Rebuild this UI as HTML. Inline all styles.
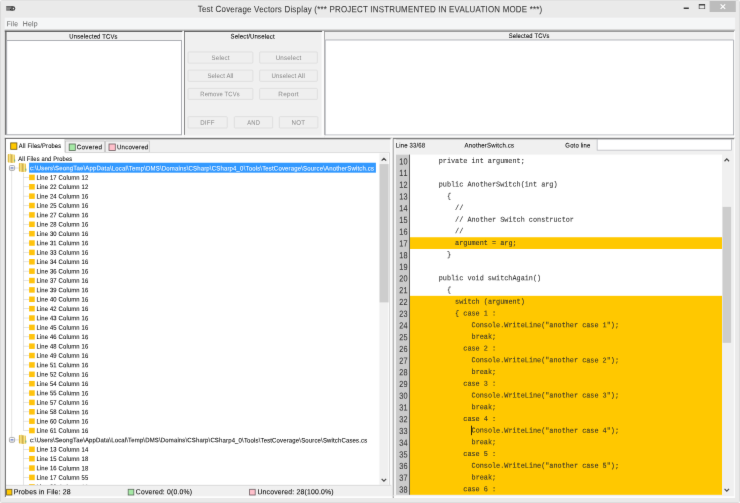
<!DOCTYPE html><html><head><meta charset="utf-8"><title>Test Coverage Vectors Display</title><style>
*{box-sizing:border-box;margin:0;padding:0}
html,body{width:740px;height:503px;overflow:hidden;background:#eaeaea}
body{font-family:"Liberation Sans",sans-serif;color:#000}
svg{position:absolute;left:0;top:0;display:block}
#s{will-change:transform}
text{font-family:"Liberation Sans",sans-serif;white-space:pre;text-rendering:geometricPrecision}
text.m{font-family:"Liberation Mono",monospace}
text.n{font-kerning:none}
</style></head><body>
<svg id="s" width="740" height="503" viewBox="0 0 740 503">
<filter id="sf" filterUnits="userSpaceOnUse" x="0" y="0" width="740" height="503" color-interpolation-filters="sRGB"><feConvolveMatrix order="3" kernelMatrix="0.0036 0.0528 0.0036 0.0528 0.7744 0.0528 0.0036 0.0528 0.0036" edgeMode="duplicate" preserveAlpha="true"/></filter>
<g filter="url(#sf)">
<rect x="0" y="0" width="740" height="503" fill="#eaeaea"/>
<text transform="matrix(0.8796 0.0007 -0.0007 1 197.75 12.1)" font-size="9" letter-spacing="0.251" fill="#333" stroke="#333" stroke-width="0.05">Test Coverage Vectors Display (*** PROJECT INSTRUMENTED IN EVALUATION MODE ***)</text>
<rect x="6.2" y="6.3" width="6.6" height="4.4" rx="0.5" fill="#7a7a7a"/>
<rect x="6.3" y="6.2" width="7.1" height="0.8" fill="#5a5a5a"/>
<path d="M11.3 6.3 H13 Q15.3 6.3 15.3 8.5 Q15.3 10.7 13 10.7 H11.3 Z" fill="#4c4c4c"/>
<ellipse cx="13.4" cy="8.5" rx="0.65" ry="0.85" fill="#ededed"/>
<circle cx="10.5" cy="9.6" r="0.55" fill="#1c1c1c"/>
<rect x="6.6" y="8" width="3.6" height="0.7" fill="#8e8e8e"/>
<rect x="709.6" y="0.9" width="26.2" height="11.1" fill="#bcbcbc"/>
<path d="M720.6 4.3 L725.2 8.9 M725.2 4.3 L720.6 8.9" stroke="#fff" stroke-width="1.15" fill="none"/>
<rect x="683.7" y="7.5" width="5.1" height="1.5" fill="#3a3a3a"/>
<path d="M698.8 4 h6.3 v5.1 h-6.3 Z M699.5 5.5 v2.9 h4.9 v-2.9 Z" fill="#454545" fill-rule="evenodd"/>
<rect x="4.7" y="17.6" width="730.6" height="12" fill="#f5f6f7"/>
<text transform="matrix(0.8954 0.0007 -0.0007 1 6.73 26.3)" font-size="7.4" letter-spacing="0.209" fill="#606060">File</text>
<text transform="matrix(0.9387 0.0007 -0.0007 1 22.63 26.3)" font-size="7.4" letter-spacing="0.267" fill="#606060">Help</text>
<rect x="4.7" y="29.6" width="730.6" height="468.3" fill="#f0f0f0"/>
<rect x="4.7" y="29.3" width="730.6" height="0.9" fill="#cfcfcf"/>
<rect x="4.8" y="30.1" width="179.1" height="107.7" fill="#f0f0f0"/>
<rect x="181.9" y="30.7" width="2" height="107.1" fill="#fcfcfc"/>
<rect x="5.4" y="135.6" width="178.5" height="2.2" fill="#fcfcfc"/>
<rect x="4.8" y="30.1" width="179.1" height="0.8" fill="#a0a0a0"/>
<rect x="4.8" y="30.9" width="177.5" height="1.05" fill="#5e5e5e"/>
<rect x="4.8" y="30.1" width="0.4" height="105" fill="#a0a0a0"/>
<rect x="5.2" y="30.9" width="1.3" height="103.9" fill="#5e5e5e"/>
<rect x="184" y="30.1" width="140.1" height="107.7" fill="#f0f0f0"/>
<rect x="321.6" y="30.7" width="2.5" height="107.1" fill="#fcfcfc"/>
<rect x="184.6" y="135.6" width="139.5" height="2.2" fill="#fcfcfc"/>
<rect x="184" y="30.1" width="140.1" height="0.8" fill="#a0a0a0"/>
<rect x="184" y="30.9" width="138.1" height="1.05" fill="#5e5e5e"/>
<rect x="184" y="30.1" width="0.3" height="105" fill="#a0a0a0"/>
<rect x="184.3" y="30.9" width="0.65" height="103.9" fill="#5e5e5e"/>
<rect x="324.2" y="30.1" width="410.9" height="107.7" fill="#f0f0f0"/>
<rect x="733.8" y="30.7" width="1.3" height="107.1" fill="#fcfcfc"/>
<rect x="324.8" y="135.6" width="410.3" height="2.2" fill="#fcfcfc"/>
<rect x="324.2" y="30.1" width="410.9" height="0.5" fill="#a2a2a2"/>
<rect x="324.2" y="30.6" width="409.86" height="1.25" fill="#8a8a8a"/>
<rect x="324.2" y="30.1" width="0.15" height="105" fill="#a2a2a2"/>
<rect x="324.35" y="30.6" width="0.65" height="104.2" fill="#8a8a8a"/>
<text transform="matrix(0.8930 0.0007 -0.0007 1 69.37 38.6)" font-size="6.6" letter-spacing="0.193" stroke="#000" stroke-width="0.06">Unselected TCVs</text>
<text transform="matrix(0.9169 0.0007 -0.0007 1 230.47 38.6)" font-size="6.6" letter-spacing="0.172" stroke="#000" stroke-width="0.06">Select/Unselect</text>
<text transform="matrix(0.8842 0.0007 -0.0007 1 508.67 38)" font-size="6.6" letter-spacing="0.193" stroke="#000" stroke-width="0.06">Selected TCVs</text>
<rect x="6.72" y="40.47" width="174.85" height="94.3" fill="#fff" stroke="#a2a4aa" stroke-width="0.85"/>
<rect x="324.9" y="39.4" width="409" height="95.8" fill="#fff"/>
<path d="M325.2 135.2 V39.95 H733.6 V135.2" fill="none" stroke="#b0b2b8" stroke-width="1.0"/>
<rect x="325" y="134.55" width="408.9" height="0.65" fill="#abadb3"/>
<rect x="188.05" y="51.95" width="64.8" height="11.2" rx="0.8" fill="#efefef" stroke="#d9d9d9" stroke-width="0.7"/>
<text transform="matrix(0.9249 0.0007 -0.0007 1 211.57 59.9)" font-size="6.6" letter-spacing="0.193" fill="#858585">Select</text>
<rect x="259.65" y="51.95" width="57.7" height="11.2" rx="0.8" fill="#efefef" stroke="#d9d9d9" stroke-width="0.7"/>
<text transform="matrix(0.9456 0.0007 -0.0007 1 275.67 59.9)" font-size="6.6" letter-spacing="0.193" fill="#858585">Unselect</text>
<rect x="188.05" y="70.15" width="64.8" height="11.2" rx="0.8" fill="#efefef" stroke="#d9d9d9" stroke-width="0.7"/>
<text transform="matrix(0.9084 0.0007 -0.0007 1 207.47 78.1)" font-size="6.6" letter-spacing="0.159" fill="#858585">Select All</text>
<rect x="259.65" y="70.15" width="57.7" height="11.2" rx="0.8" fill="#efefef" stroke="#d9d9d9" stroke-width="0.7"/>
<text transform="matrix(0.9163 0.0007 -0.0007 1 271.57 78.1)" font-size="6.6" letter-spacing="0.165" fill="#858585">Unselect All</text>
<rect x="188.05" y="88.45" width="64.8" height="11" rx="0.8" fill="#efefef" stroke="#d9d9d9" stroke-width="0.7"/>
<text transform="matrix(0.8738 0.0007 -0.0007 1 200.27 96.3)" font-size="6.6" letter-spacing="0.225" fill="#858585">Remove TCVs</text>
<rect x="259.65" y="88.45" width="57.7" height="11" rx="0.8" fill="#efefef" stroke="#d9d9d9" stroke-width="0.7"/>
<text transform="matrix(0.9667 0.0007 -0.0007 1 278.37 96.3)" font-size="6.6" letter-spacing="0.209" fill="#858585">Report</text>
<rect x="188.05" y="116.65" width="39.2" height="11.4" rx="0.8" fill="#efefef" stroke="#d9d9d9" stroke-width="0.7"/>
<text transform="matrix(0.9303 0.0007 -0.0007 1 200.17 124.7)" font-size="6.6" letter-spacing="0.257" fill="#858585">DIFF</text>
<rect x="234.35" y="116.65" width="38.3" height="11.4" rx="0.8" fill="#efefef" stroke="#d9d9d9" stroke-width="0.7"/>
<text transform="matrix(0.8698 0.0007 -0.0007 1 247.17 124.7)" font-size="6.6" letter-spacing="0.367" fill="#858585">AND</text>
<rect x="279.35" y="116.65" width="38.5" height="11.4" rx="0.8" fill="#efefef" stroke="#d9d9d9" stroke-width="0.7"/>
<text transform="matrix(0.9314 0.0007 -0.0007 1 291.47 124.7)" font-size="6.6" letter-spacing="0.367" fill="#858585">NOT</text>
<rect x="4.8" y="137.8" width="387.6" height="360.2" fill="#f0f0f0"/>
<rect x="390.1" y="138.4" width="2.3" height="359.6" fill="#fcfcfc"/>
<rect x="5.4" y="496.5" width="387" height="1.5" fill="#fcfcfc"/>
<rect x="4.8" y="137.8" width="387.6" height="0.4" fill="#929292"/>
<rect x="4.8" y="138.2" width="385.76" height="1.05" fill="#626262"/>
<rect x="4.8" y="137.8" width="0.4" height="359.45" fill="#929292"/>
<rect x="5.2" y="138.2" width="1.1" height="358.75" fill="#626262"/>
<rect x="6" y="152.2" width="383.6" height="332.7" fill="#fff"/>
<rect x="6" y="139" width="58.6" height="13.4" fill="#fff"/>
<rect x="64.4" y="139.3" width="0.5" height="12.9" fill="#cfcfcf"/>
<rect x="65.5" y="141" width="38.8" height="11.3" fill="#f0f0f0" stroke="#b4b4b4" stroke-width="0.6"/>
<rect x="105.7" y="141" width="43.5" height="11.3" fill="#f0f0f0" stroke="#b4b4b4" stroke-width="0.6"/>
<rect x="64.9" y="152.1" width="324.7" height="0.6" fill="#fff"/>
<rect x="10.7" y="142.9" width="6.2" height="6.4" fill="#ffc800" stroke="#6b5510" stroke-width="0.8"/>
<rect x="69.2" y="144" width="6.1" height="6.4" fill="#a6e9a6" stroke="#566a56" stroke-width="0.8"/>
<rect x="109" y="144" width="6.3" height="6.4" fill="#ffc0cb" stroke="#6e5c60" stroke-width="0.8"/>
<text transform="matrix(0.8756 0.0007 -0.0007 1 18.87 147.9)" font-size="6.6" letter-spacing="0.161" stroke="#000" stroke-width="0.06">All Files/Probes</text>
<text transform="matrix(0.9543 0.0007 -0.0007 1 76.87 149.2)" font-size="6.6" letter-spacing="0.219" stroke="#000" stroke-width="0.06">Covered</text>
<text transform="matrix(0.9304 0.0007 -0.0007 1 116.97 149.2)" font-size="6.6" letter-spacing="0.210" stroke="#000" stroke-width="0.06">Uncovered</text>
<defs><linearGradient id="g1" x1="0" x2="1" y1="0" y2="0"><stop offset="0" stop-color="#c9a022"/><stop offset="0.3" stop-color="#eccb58"/><stop offset="0.55" stop-color="#f9e9a0"/><stop offset="0.8" stop-color="#e6c450"/><stop offset="1" stop-color="#bd931c"/></linearGradient><linearGradient id="g2" x1="0" x2="1" y1="0" y2="0"><stop offset="0" stop-color="#bd931c"/><stop offset="0.3" stop-color="#edd060"/><stop offset="0.5" stop-color="#f8e89c"/><stop offset="0.8" stop-color="#e8c856"/><stop offset="1" stop-color="#caa22a"/></linearGradient><linearGradient id="g3" x1="0" x2="0" y1="0" y2="1"><stop offset="0" stop-color="#fff"/><stop offset="1" stop-color="#dedede"/></linearGradient></defs>
<svg x="6" y="152.2" width="373.4" height="332.7" viewBox="6 152.2 373.4 332.7">
<rect x="11.5" y="170.82" width="0.6" height="266.3" fill="#d2d2d2"/>
<rect x="14.9" y="167.72" width="3.9" height="0.6" fill="#d2d2d2"/>
<rect x="14.9" y="439.63" width="3.9" height="0.6" fill="#d2d2d2"/>
<rect x="23" y="172.71" width="0.6" height="257.84" fill="#d2d2d2"/>
<rect x="23" y="444.62" width="0.6" height="41.38" fill="#d2d2d2"/>
<g transform="translate(7.8 153.81)"><path d="M0 0.9 Q0 0.2 0.8 0.15 L2.9 0 Q3.6 0 3.6 0.7 L3.6 8.6 Q3.5 9.1 2.8 9.05 L0.7 8.7 Q0 8.6 0 8 Z" fill="url(#g1)"/><path d="M3.6 1.0 Q3.6 0.4 4.3 0.4 L6.3 0.7 Q7.0 0.8 7.0 1.5 L7.3 8.2 Q7.3 8.9 6.6 9.0 L4.4 9.2 Q3.6 9.2 3.6 8.6 Z" fill="url(#g2)"/><rect x="6.4" y="5.7" width="1.0" height="1.9" rx="0.3" fill="#5fb391"/></g>
<text transform="matrix(0.8934 0.0007 -0.0007 1 18.28 160.95)" font-size="6.45" letter-spacing="0.159" stroke="#000" stroke-width="0.06">All Files and Probes</text>
<rect x="9.43" y="165.55" width="5.15" height="4.85" rx="1.1" fill="url(#g3)" stroke="#a2a2a2" stroke-width="0.85"/>
<rect x="10.6" y="167.47" width="2.8" height="0.95" fill="#3f5ab8"/>
<g transform="translate(18.9 162.89)"><path d="M0 0.9 Q0 0.2 0.8 0.15 L2.9 0 Q3.6 0 3.6 0.7 L3.6 8.6 Q3.5 9.1 2.8 9.05 L0.7 8.7 Q0 8.6 0 8 Z" fill="url(#g1)"/><path d="M3.6 1.0 Q3.6 0.4 4.3 0.4 L6.3 0.7 Q7.0 0.8 7.0 1.5 L7.3 8.2 Q7.3 8.9 6.6 9.0 L4.4 9.2 Q3.6 9.2 3.6 8.6 Z" fill="url(#g2)"/><rect x="6.4" y="5.7" width="1.0" height="1.9" rx="0.3" fill="#5fb391"/></g>
<rect x="29.1" y="162.74" width="346.8" height="9.93" fill="#3399ff"/>
<text transform="matrix(0.9360 0.0007 -0.0007 1 29.88 170.32)" font-size="6.45" letter-spacing="0.172" fill="#fff" stroke="#fff" stroke-width="0.06">c:\Users\SeongTae\AppData\Local\Temp\DMS\Domains\CSharp\CSharp4_0\Tools\TestCoverage\Source\AnotherSwitch.cs</text>
<rect x="23.3" y="177.1" width="5.9" height="0.6" fill="#d2d2d2"/>
<rect x="29.1" y="174.65" width="5.65" height="5.5" fill="#ffc30d"/>
<text transform="matrix(0.9114 0.0007 -0.0007 1 36.38 179.7)" font-size="6.45" letter-spacing="0.178" stroke="#000" stroke-width="0.06">Line 17 Column 12</text>
<rect x="23.3" y="186.48" width="5.9" height="0.6" fill="#d2d2d2"/>
<rect x="29.1" y="184.03" width="5.65" height="5.5" fill="#ffc30d"/>
<text transform="matrix(0.9114 0.0007 -0.0007 1 36.38 189.08)" font-size="6.45" letter-spacing="0.178" stroke="#000" stroke-width="0.06">Line 22 Column 12</text>
<rect x="23.3" y="195.85" width="5.9" height="0.6" fill="#d2d2d2"/>
<rect x="29.1" y="193.4" width="5.65" height="5.5" fill="#ffc30d"/>
<text transform="matrix(0.9114 0.0007 -0.0007 1 36.38 198.45)" font-size="6.45" letter-spacing="0.178" stroke="#000" stroke-width="0.06">Line 24 Column 16</text>
<rect x="23.3" y="205.23" width="5.9" height="0.6" fill="#d2d2d2"/>
<rect x="29.1" y="202.78" width="5.65" height="5.5" fill="#ffc30d"/>
<text transform="matrix(0.9114 0.0007 -0.0007 1 36.38 207.83)" font-size="6.45" letter-spacing="0.178" stroke="#000" stroke-width="0.06">Line 25 Column 16</text>
<rect x="23.3" y="214.6" width="5.9" height="0.6" fill="#d2d2d2"/>
<rect x="29.1" y="212.15" width="5.65" height="5.5" fill="#ffc30d"/>
<text transform="matrix(0.9114 0.0007 -0.0007 1 36.38 217.2)" font-size="6.45" letter-spacing="0.178" stroke="#000" stroke-width="0.06">Line 27 Column 16</text>
<rect x="23.3" y="223.98" width="5.9" height="0.6" fill="#d2d2d2"/>
<rect x="29.1" y="221.53" width="5.65" height="5.5" fill="#ffc30d"/>
<text transform="matrix(0.9114 0.0007 -0.0007 1 36.38 226.58)" font-size="6.45" letter-spacing="0.178" stroke="#000" stroke-width="0.06">Line 28 Column 16</text>
<rect x="23.3" y="233.36" width="5.9" height="0.6" fill="#d2d2d2"/>
<rect x="29.1" y="230.91" width="5.65" height="5.5" fill="#ffc30d"/>
<text transform="matrix(0.9114 0.0007 -0.0007 1 36.38 235.96)" font-size="6.45" letter-spacing="0.178" stroke="#000" stroke-width="0.06">Line 30 Column 16</text>
<rect x="23.3" y="242.73" width="5.9" height="0.6" fill="#d2d2d2"/>
<rect x="29.1" y="240.28" width="5.65" height="5.5" fill="#ffc30d"/>
<text transform="matrix(0.9114 0.0007 -0.0007 1 36.38 245.33)" font-size="6.45" letter-spacing="0.178" stroke="#000" stroke-width="0.06">Line 31 Column 16</text>
<rect x="23.3" y="252.11" width="5.9" height="0.6" fill="#d2d2d2"/>
<rect x="29.1" y="249.66" width="5.65" height="5.5" fill="#ffc30d"/>
<text transform="matrix(0.9114 0.0007 -0.0007 1 36.38 254.71)" font-size="6.45" letter-spacing="0.178" stroke="#000" stroke-width="0.06">Line 33 Column 16</text>
<rect x="23.3" y="261.48" width="5.9" height="0.6" fill="#d2d2d2"/>
<rect x="29.1" y="259.03" width="5.65" height="5.5" fill="#ffc30d"/>
<text transform="matrix(0.9114 0.0007 -0.0007 1 36.38 264.08)" font-size="6.45" letter-spacing="0.178" stroke="#000" stroke-width="0.06">Line 34 Column 16</text>
<rect x="23.3" y="270.86" width="5.9" height="0.6" fill="#d2d2d2"/>
<rect x="29.1" y="268.41" width="5.65" height="5.5" fill="#ffc30d"/>
<text transform="matrix(0.9114 0.0007 -0.0007 1 36.38 273.46)" font-size="6.45" letter-spacing="0.178" stroke="#000" stroke-width="0.06">Line 36 Column 16</text>
<rect x="23.3" y="280.24" width="5.9" height="0.6" fill="#d2d2d2"/>
<rect x="29.1" y="277.79" width="5.65" height="5.5" fill="#ffc30d"/>
<text transform="matrix(0.9114 0.0007 -0.0007 1 36.38 282.84)" font-size="6.45" letter-spacing="0.178" stroke="#000" stroke-width="0.06">Line 37 Column 16</text>
<rect x="23.3" y="289.61" width="5.9" height="0.6" fill="#d2d2d2"/>
<rect x="29.1" y="287.16" width="5.65" height="5.5" fill="#ffc30d"/>
<text transform="matrix(0.9114 0.0007 -0.0007 1 36.38 292.21)" font-size="6.45" letter-spacing="0.178" stroke="#000" stroke-width="0.06">Line 39 Column 16</text>
<rect x="23.3" y="298.99" width="5.9" height="0.6" fill="#d2d2d2"/>
<rect x="29.1" y="296.54" width="5.65" height="5.5" fill="#ffc30d"/>
<text transform="matrix(0.9114 0.0007 -0.0007 1 36.38 301.59)" font-size="6.45" letter-spacing="0.178" stroke="#000" stroke-width="0.06">Line 40 Column 16</text>
<rect x="23.3" y="308.36" width="5.9" height="0.6" fill="#d2d2d2"/>
<rect x="29.1" y="305.91" width="5.65" height="5.5" fill="#ffc30d"/>
<text transform="matrix(0.9114 0.0007 -0.0007 1 36.38 310.96)" font-size="6.45" letter-spacing="0.178" stroke="#000" stroke-width="0.06">Line 42 Column 16</text>
<rect x="23.3" y="317.74" width="5.9" height="0.6" fill="#d2d2d2"/>
<rect x="29.1" y="315.29" width="5.65" height="5.5" fill="#ffc30d"/>
<text transform="matrix(0.9114 0.0007 -0.0007 1 36.38 320.34)" font-size="6.45" letter-spacing="0.178" stroke="#000" stroke-width="0.06">Line 43 Column 16</text>
<rect x="23.3" y="327.12" width="5.9" height="0.6" fill="#d2d2d2"/>
<rect x="29.1" y="324.67" width="5.65" height="5.5" fill="#ffc30d"/>
<text transform="matrix(0.9114 0.0007 -0.0007 1 36.38 329.72)" font-size="6.45" letter-spacing="0.178" stroke="#000" stroke-width="0.06">Line 45 Column 16</text>
<rect x="23.3" y="336.49" width="5.9" height="0.6" fill="#d2d2d2"/>
<rect x="29.1" y="334.04" width="5.65" height="5.5" fill="#ffc30d"/>
<text transform="matrix(0.9114 0.0007 -0.0007 1 36.38 339.09)" font-size="6.45" letter-spacing="0.178" stroke="#000" stroke-width="0.06">Line 46 Column 16</text>
<rect x="23.3" y="345.87" width="5.9" height="0.6" fill="#d2d2d2"/>
<rect x="29.1" y="343.42" width="5.65" height="5.5" fill="#ffc30d"/>
<text transform="matrix(0.9114 0.0007 -0.0007 1 36.38 348.47)" font-size="6.45" letter-spacing="0.178" stroke="#000" stroke-width="0.06">Line 48 Column 16</text>
<rect x="23.3" y="355.24" width="5.9" height="0.6" fill="#d2d2d2"/>
<rect x="29.1" y="352.79" width="5.65" height="5.5" fill="#ffc30d"/>
<text transform="matrix(0.9114 0.0007 -0.0007 1 36.38 357.84)" font-size="6.45" letter-spacing="0.178" stroke="#000" stroke-width="0.06">Line 49 Column 16</text>
<rect x="23.3" y="364.62" width="5.9" height="0.6" fill="#d2d2d2"/>
<rect x="29.1" y="362.17" width="5.65" height="5.5" fill="#ffc30d"/>
<text transform="matrix(0.9114 0.0007 -0.0007 1 36.38 367.22)" font-size="6.45" letter-spacing="0.178" stroke="#000" stroke-width="0.06">Line 51 Column 16</text>
<rect x="23.3" y="374" width="5.9" height="0.6" fill="#d2d2d2"/>
<rect x="29.1" y="371.55" width="5.65" height="5.5" fill="#ffc30d"/>
<text transform="matrix(0.9114 0.0007 -0.0007 1 36.38 376.6)" font-size="6.45" letter-spacing="0.178" stroke="#000" stroke-width="0.06">Line 52 Column 16</text>
<rect x="23.3" y="383.37" width="5.9" height="0.6" fill="#d2d2d2"/>
<rect x="29.1" y="380.92" width="5.65" height="5.5" fill="#ffc30d"/>
<text transform="matrix(0.9114 0.0007 -0.0007 1 36.38 385.97)" font-size="6.45" letter-spacing="0.178" stroke="#000" stroke-width="0.06">Line 54 Column 16</text>
<rect x="23.3" y="392.75" width="5.9" height="0.6" fill="#d2d2d2"/>
<rect x="29.1" y="390.3" width="5.65" height="5.5" fill="#ffc30d"/>
<text transform="matrix(0.9114 0.0007 -0.0007 1 36.38 395.35)" font-size="6.45" letter-spacing="0.178" stroke="#000" stroke-width="0.06">Line 55 Column 16</text>
<rect x="23.3" y="402.12" width="5.9" height="0.6" fill="#d2d2d2"/>
<rect x="29.1" y="399.67" width="5.65" height="5.5" fill="#ffc30d"/>
<text transform="matrix(0.9114 0.0007 -0.0007 1 36.38 404.72)" font-size="6.45" letter-spacing="0.178" stroke="#000" stroke-width="0.06">Line 57 Column 16</text>
<rect x="23.3" y="411.5" width="5.9" height="0.6" fill="#d2d2d2"/>
<rect x="29.1" y="409.05" width="5.65" height="5.5" fill="#ffc30d"/>
<text transform="matrix(0.9114 0.0007 -0.0007 1 36.38 414.1)" font-size="6.45" letter-spacing="0.178" stroke="#000" stroke-width="0.06">Line 58 Column 16</text>
<rect x="23.3" y="420.88" width="5.9" height="0.6" fill="#d2d2d2"/>
<rect x="29.1" y="418.43" width="5.65" height="5.5" fill="#ffc30d"/>
<text transform="matrix(0.9114 0.0007 -0.0007 1 36.38 423.48)" font-size="6.45" letter-spacing="0.178" stroke="#000" stroke-width="0.06">Line 60 Column 16</text>
<rect x="23.3" y="430.25" width="5.9" height="0.6" fill="#d2d2d2"/>
<rect x="29.1" y="427.8" width="5.65" height="5.5" fill="#ffc30d"/>
<text transform="matrix(0.9114 0.0007 -0.0007 1 36.38 432.85)" font-size="6.45" letter-spacing="0.178" stroke="#000" stroke-width="0.06">Line 61 Column 16</text>
<rect x="9.43" y="437.45" width="5.15" height="4.85" rx="1.1" fill="url(#g3)" stroke="#a2a2a2" stroke-width="0.85"/>
<rect x="10.6" y="439.38" width="2.8" height="0.95" fill="#3f5ab8"/>
<g transform="translate(18.9 434.79)"><path d="M0 0.9 Q0 0.2 0.8 0.15 L2.9 0 Q3.6 0 3.6 0.7 L3.6 8.6 Q3.5 9.1 2.8 9.05 L0.7 8.7 Q0 8.6 0 8 Z" fill="url(#g1)"/><path d="M3.6 1.0 Q3.6 0.4 4.3 0.4 L6.3 0.7 Q7.0 0.8 7.0 1.5 L7.3 8.2 Q7.3 8.9 6.6 9.0 L4.4 9.2 Q3.6 9.2 3.6 8.6 Z" fill="url(#g2)"/><rect x="6.4" y="5.7" width="1.0" height="1.9" rx="0.3" fill="#5fb391"/></g>
<text transform="matrix(0.9290 0.0007 -0.0007 1 29.88 442.23)" font-size="6.45" letter-spacing="0.173" stroke="#000" stroke-width="0.06">c:\Users\SeongTae\AppData\Local\Temp\DMS\Domains\CSharp\CSharp4_0\Tools\TestCoverage\Source\SwitchCases.cs</text>
<rect x="23.3" y="449" width="5.9" height="0.6" fill="#d2d2d2"/>
<rect x="29.1" y="446.55" width="5.65" height="5.5" fill="#ffc30d"/>
<text transform="matrix(0.9114 0.0007 -0.0007 1 36.38 451.6)" font-size="6.45" letter-spacing="0.178" stroke="#000" stroke-width="0.06">Line 13 Column 14</text>
<rect x="23.3" y="458.38" width="5.9" height="0.6" fill="#d2d2d2"/>
<rect x="29.1" y="455.93" width="5.65" height="5.5" fill="#ffc30d"/>
<text transform="matrix(0.9114 0.0007 -0.0007 1 36.38 460.98)" font-size="6.45" letter-spacing="0.178" stroke="#000" stroke-width="0.06">Line 15 Column 18</text>
<rect x="23.3" y="467.76" width="5.9" height="0.6" fill="#d2d2d2"/>
<rect x="29.1" y="465.31" width="5.65" height="5.5" fill="#ffc30d"/>
<text transform="matrix(0.9114 0.0007 -0.0007 1 36.38 470.36)" font-size="6.45" letter-spacing="0.178" stroke="#000" stroke-width="0.06">Line 16 Column 18</text>
<rect x="23.3" y="477.13" width="5.9" height="0.6" fill="#d2d2d2"/>
<rect x="29.1" y="474.68" width="5.65" height="5.5" fill="#ffc30d"/>
<text transform="matrix(0.9114 0.0007 -0.0007 1 36.38 479.73)" font-size="6.45" letter-spacing="0.178" stroke="#000" stroke-width="0.06">Line 17 Column 55</text>
<rect x="23.3" y="486.51" width="5.9" height="0.6" fill="#d2d2d2"/>
<rect x="29.1" y="484.06" width="5.65" height="5.5" fill="#ffc30d"/>
<text transform="matrix(0.9114 0.0007 -0.0007 1 36.38 489.11)" font-size="6.45" letter-spacing="0.178" stroke="#000" stroke-width="0.06">Line 20 Column 18</text>
</svg>
<path d="M64.9 152.55 H389.5 V484.9" fill="none" stroke="#c6c6c6" stroke-width="0.6"/>
<rect x="379.4" y="153.2" width="9" height="331.7" fill="#f0f0f0"/>
<rect x="379.6" y="164.1" width="9" height="138.3" fill="#cdcdcd"/>
<path d="M381.65 160.55 L383.9 158.25 L386.15 160.55" stroke="#484848" stroke-width="1.2" fill="none"/>
<path d="M381.65 478.85 L383.9 481.15 L386.15 478.85" stroke="#484848" stroke-width="1.2" fill="none"/>
<rect x="6" y="484.9" width="386" height="12.1" fill="#f0f0f0"/>
<rect x="6" y="484.9" width="384.9" height="0.7" fill="#d2d2d2"/>
<rect x="6.6" y="489.3" width="5.3" height="5.7" fill="#ffc800" stroke="#6b5a20" stroke-width="0.8"/>
<rect x="128.2" y="489.3" width="5.6" height="5.7" fill="#a6e9a6" stroke="#5e6e5e" stroke-width="0.8"/>
<rect x="249.6" y="489.3" width="5.6" height="5.7" fill="#ffc0cb" stroke="#6e6064" stroke-width="0.8"/>
<text transform="matrix(0.9504 0.0007 -0.0007 1 13.83 494.2)" font-size="7.3" letter-spacing="0.176" stroke="#000" stroke-width="0.06">Probes in File: 28</text>
<text transform="matrix(0.9321 0.0007 -0.0007 1 135.83 494.2)" font-size="7.3" letter-spacing="0.201" stroke="#000" stroke-width="0.06">Covered: 0(0.0%)</text>
<text transform="matrix(0.9380 0.0007 -0.0007 1 257.44 494.2)" font-size="7.3" letter-spacing="0.203" stroke="#000" stroke-width="0.06">Uncovered: 28(100.0%)</text>
<rect x="5.9" y="496.4" width="386.4" height="1.5" fill="#fff"/>
<rect x="392.9" y="137.8" width="342.2" height="360.2" fill="#f0f0f0"/>
<rect x="733.8" y="138.4" width="1.3" height="359.6" fill="#fcfcfc"/>
<rect x="393.5" y="496.5" width="341.6" height="1.5" fill="#fcfcfc"/>
<rect x="392.9" y="137.8" width="342.2" height="0.4" fill="#929292"/>
<rect x="392.9" y="138.2" width="341.16" height="1.05" fill="#6a6a6a"/>
<rect x="392.9" y="137.8" width="0" height="359.45" fill="#929292"/>
<rect x="392.9" y="138.2" width="0.01" height="358.75" fill="#6a6a6a"/>
<rect x="392.85" y="139.15" width="1" height="358.85" fill="#686868"/>
<rect x="393.5" y="139.3" width="2.5" height="357.3" fill="#f4f4f4"/>
<text transform="matrix(0.9109 0.0007 -0.0007 1 395.67 147.45)" font-size="6.6" letter-spacing="0.180" stroke="#000" stroke-width="0.06">Line 33/68</text>
<text transform="matrix(0.9234 0.0007 -0.0007 1 464.57 147.45)" font-size="6.6" letter-spacing="0.179" stroke="#000" stroke-width="0.06">AnotherSwitch.cs</text>
<text transform="matrix(0.8976 0.0007 -0.0007 1 565.37 147.45)" font-size="6.6" letter-spacing="0.174" stroke="#000" stroke-width="0.06">Goto line</text>
<rect x="597.15" y="139.25" width="134.3" height="10.9" fill="#fff" stroke="#b2b4ba" stroke-width="0.7"/>
<rect x="396" y="154.6" width="326.1" height="340.3" fill="#fff"/>
<rect x="396" y="154.6" width="13.2" height="340.3" fill="#cbcbcb"/>
<rect x="409.1" y="154.6" width="0.9" height="340.3" fill="#505050"/>
<rect x="410" y="237.24" width="312.1" height="11.72" fill="#ffc800"/>
<rect x="410" y="295.84" width="312.1" height="199.06" fill="#ffc800"/>
<text class="n" transform="matrix(0.8200 0.0007 -0.0007 1 407.45 164.4)" font-size="8.9" fill="#333" stroke="#333" stroke-width="0.05" text-anchor="end">10</text>
<text class="m" transform="matrix(0.9237 0.0007 -0.0007 1 438.71 163.05)" font-size="7.4" fill="#2c2c2c" stroke="#2c2c2c" stroke-width="0.06">private int argument;</text>
<text class="n" transform="matrix(0.8200 0.0007 -0.0007 1 407.45 176.12)" font-size="8.9" fill="#333" stroke="#333" stroke-width="0.05" text-anchor="end">11</text>
<text class="n" transform="matrix(0.8200 0.0007 -0.0007 1 407.45 187.84)" font-size="8.9" fill="#333" stroke="#333" stroke-width="0.05" text-anchor="end">12</text>
<text class="m" transform="matrix(0.9237 0.0007 -0.0007 1 438.71 186.49)" font-size="7.4" fill="#2c2c2c" stroke="#2c2c2c" stroke-width="0.06">public AnotherSwitch(int arg)</text>
<text class="n" transform="matrix(0.8200 0.0007 -0.0007 1 407.45 199.56)" font-size="8.9" fill="#333" stroke="#333" stroke-width="0.05" text-anchor="end">13</text>
<text class="m" transform="matrix(0.9234 0.0007 -0.0007 1 446.92 198.21)" font-size="7.4" fill="#2c2c2c" stroke="#2c2c2c" stroke-width="0.06">{</text>
<text class="n" transform="matrix(0.8200 0.0007 -0.0007 1 407.45 211.28)" font-size="8.9" fill="#333" stroke="#333" stroke-width="0.05" text-anchor="end">14</text>
<text class="m" transform="matrix(0.9236 0.0007 -0.0007 1 455.12 209.93)" font-size="7.4" fill="#2c2c2c" stroke="#2c2c2c" stroke-width="0.06">//</text>
<text class="n" transform="matrix(0.8200 0.0007 -0.0007 1 407.45 223)" font-size="8.9" fill="#333" stroke="#333" stroke-width="0.05" text-anchor="end">15</text>
<text class="m" transform="matrix(0.9237 0.0007 -0.0007 1 455.12 221.65)" font-size="7.4" fill="#2c2c2c" stroke="#2c2c2c" stroke-width="0.06">// Another Switch constructor</text>
<text class="n" transform="matrix(0.8200 0.0007 -0.0007 1 407.45 234.72)" font-size="8.9" fill="#333" stroke="#333" stroke-width="0.05" text-anchor="end">16</text>
<text class="m" transform="matrix(0.9236 0.0007 -0.0007 1 455.12 233.37)" font-size="7.4" fill="#2c2c2c" stroke="#2c2c2c" stroke-width="0.06">//</text>
<text class="n" transform="matrix(0.8200 0.0007 -0.0007 1 407.45 246.44)" font-size="8.9" fill="#333" stroke="#333" stroke-width="0.05" text-anchor="end">17</text>
<text class="m" transform="matrix(0.9237 0.0007 -0.0007 1 455.12 245.09)" font-size="7.4" fill="#2c2c2c" stroke="#2c2c2c" stroke-width="0.06">argument = arg;</text>
<text class="n" transform="matrix(0.8200 0.0007 -0.0007 1 407.45 258.16)" font-size="8.9" fill="#333" stroke="#333" stroke-width="0.05" text-anchor="end">18</text>
<text class="m" transform="matrix(0.9234 0.0007 -0.0007 1 446.92 256.81)" font-size="7.4" fill="#2c2c2c" stroke="#2c2c2c" stroke-width="0.06">}</text>
<text class="n" transform="matrix(0.8200 0.0007 -0.0007 1 407.45 269.88)" font-size="8.9" fill="#333" stroke="#333" stroke-width="0.05" text-anchor="end">19</text>
<text class="n" transform="matrix(0.8200 0.0007 -0.0007 1 407.45 281.6)" font-size="8.9" fill="#333" stroke="#333" stroke-width="0.05" text-anchor="end">20</text>
<text class="m" transform="matrix(0.9237 0.0007 -0.0007 1 438.71 280.25)" font-size="7.4" fill="#2c2c2c" stroke="#2c2c2c" stroke-width="0.06">public void switchAgain()</text>
<text class="n" transform="matrix(0.8200 0.0007 -0.0007 1 407.45 293.32)" font-size="8.9" fill="#333" stroke="#333" stroke-width="0.05" text-anchor="end">21</text>
<text class="m" transform="matrix(0.9234 0.0007 -0.0007 1 446.92 291.97)" font-size="7.4" fill="#2c2c2c" stroke="#2c2c2c" stroke-width="0.06">{</text>
<text class="n" transform="matrix(0.8200 0.0007 -0.0007 1 407.45 305.04)" font-size="8.9" fill="#333" stroke="#333" stroke-width="0.05" text-anchor="end">22</text>
<text class="m" transform="matrix(0.9237 0.0007 -0.0007 1 455.12 303.69)" font-size="7.4" fill="#2c2c2c" stroke="#2c2c2c" stroke-width="0.06">switch (argument)</text>
<text class="n" transform="matrix(0.8200 0.0007 -0.0007 1 407.45 316.76)" font-size="8.9" fill="#333" stroke="#333" stroke-width="0.05" text-anchor="end">23</text>
<text class="m" transform="matrix(0.9237 0.0007 -0.0007 1 455.12 315.41)" font-size="7.4" fill="#2c2c2c" stroke="#2c2c2c" stroke-width="0.06">{ case 1 :</text>
<text class="n" transform="matrix(0.8200 0.0007 -0.0007 1 407.45 328.48)" font-size="8.9" fill="#333" stroke="#333" stroke-width="0.05" text-anchor="end">24</text>
<text class="m" transform="matrix(0.9237 0.0007 -0.0007 1 471.53 327.13)" font-size="7.4" fill="#2c2c2c" stroke="#2c2c2c" stroke-width="0.06">Console.WriteLine("another case 1");</text>
<text class="n" transform="matrix(0.8200 0.0007 -0.0007 1 407.45 340.2)" font-size="8.9" fill="#333" stroke="#333" stroke-width="0.05" text-anchor="end">25</text>
<text class="m" transform="matrix(0.9237 0.0007 -0.0007 1 471.53 338.85)" font-size="7.4" fill="#2c2c2c" stroke="#2c2c2c" stroke-width="0.06">break;</text>
<text class="n" transform="matrix(0.8200 0.0007 -0.0007 1 407.45 351.92)" font-size="8.9" fill="#333" stroke="#333" stroke-width="0.05" text-anchor="end">26</text>
<text class="m" transform="matrix(0.9237 0.0007 -0.0007 1 463.32 350.57)" font-size="7.4" fill="#2c2c2c" stroke="#2c2c2c" stroke-width="0.06">case 2 :</text>
<text class="n" transform="matrix(0.8200 0.0007 -0.0007 1 407.45 363.64)" font-size="8.9" fill="#333" stroke="#333" stroke-width="0.05" text-anchor="end">27</text>
<text class="m" transform="matrix(0.9237 0.0007 -0.0007 1 471.53 362.29)" font-size="7.4" fill="#2c2c2c" stroke="#2c2c2c" stroke-width="0.06">Console.WriteLine("another case 2");</text>
<text class="n" transform="matrix(0.8200 0.0007 -0.0007 1 407.45 375.36)" font-size="8.9" fill="#333" stroke="#333" stroke-width="0.05" text-anchor="end">28</text>
<text class="m" transform="matrix(0.9237 0.0007 -0.0007 1 471.53 374.01)" font-size="7.4" fill="#2c2c2c" stroke="#2c2c2c" stroke-width="0.06">break;</text>
<text class="n" transform="matrix(0.8200 0.0007 -0.0007 1 407.45 387.08)" font-size="8.9" fill="#333" stroke="#333" stroke-width="0.05" text-anchor="end">29</text>
<text class="m" transform="matrix(0.9237 0.0007 -0.0007 1 463.32 385.73)" font-size="7.4" fill="#2c2c2c" stroke="#2c2c2c" stroke-width="0.06">case 3 :</text>
<text class="n" transform="matrix(0.8200 0.0007 -0.0007 1 407.45 398.8)" font-size="8.9" fill="#333" stroke="#333" stroke-width="0.05" text-anchor="end">30</text>
<text class="m" transform="matrix(0.9237 0.0007 -0.0007 1 471.53 397.45)" font-size="7.4" fill="#2c2c2c" stroke="#2c2c2c" stroke-width="0.06">Console.WriteLine("another case 3");</text>
<text class="n" transform="matrix(0.8200 0.0007 -0.0007 1 407.45 410.52)" font-size="8.9" fill="#333" stroke="#333" stroke-width="0.05" text-anchor="end">31</text>
<text class="m" transform="matrix(0.9237 0.0007 -0.0007 1 471.53 409.17)" font-size="7.4" fill="#2c2c2c" stroke="#2c2c2c" stroke-width="0.06">break;</text>
<text class="n" transform="matrix(0.8200 0.0007 -0.0007 1 407.45 422.24)" font-size="8.9" fill="#333" stroke="#333" stroke-width="0.05" text-anchor="end">32</text>
<text class="m" transform="matrix(0.9237 0.0007 -0.0007 1 463.32 420.89)" font-size="7.4" fill="#2c2c2c" stroke="#2c2c2c" stroke-width="0.06">case 4 :</text>
<text class="n" transform="matrix(0.8200 0.0007 -0.0007 1 407.45 433.96)" font-size="8.9" fill="#333" stroke="#333" stroke-width="0.05" text-anchor="end">33</text>
<text class="m" transform="matrix(0.9237 0.0007 -0.0007 1 471.53 432.61)" font-size="7.4" fill="#2c2c2c" stroke="#2c2c2c" stroke-width="0.06">Console.WriteLine("another case 4");</text>
<text class="n" transform="matrix(0.8200 0.0007 -0.0007 1 407.45 445.68)" font-size="8.9" fill="#333" stroke="#333" stroke-width="0.05" text-anchor="end">34</text>
<text class="m" transform="matrix(0.9237 0.0007 -0.0007 1 471.53 444.33)" font-size="7.4" fill="#2c2c2c" stroke="#2c2c2c" stroke-width="0.06">break;</text>
<text class="n" transform="matrix(0.8200 0.0007 -0.0007 1 407.45 457.4)" font-size="8.9" fill="#333" stroke="#333" stroke-width="0.05" text-anchor="end">35</text>
<text class="m" transform="matrix(0.9237 0.0007 -0.0007 1 463.32 456.05)" font-size="7.4" fill="#2c2c2c" stroke="#2c2c2c" stroke-width="0.06">case 5 :</text>
<text class="n" transform="matrix(0.8200 0.0007 -0.0007 1 407.45 469.12)" font-size="8.9" fill="#333" stroke="#333" stroke-width="0.05" text-anchor="end">36</text>
<text class="m" transform="matrix(0.9237 0.0007 -0.0007 1 471.53 467.77)" font-size="7.4" fill="#2c2c2c" stroke="#2c2c2c" stroke-width="0.06">Console.WriteLine("another case 5");</text>
<text class="n" transform="matrix(0.8200 0.0007 -0.0007 1 407.45 480.84)" font-size="8.9" fill="#333" stroke="#333" stroke-width="0.05" text-anchor="end">37</text>
<text class="m" transform="matrix(0.9237 0.0007 -0.0007 1 471.53 479.49)" font-size="7.4" fill="#2c2c2c" stroke="#2c2c2c" stroke-width="0.06">break;</text>
<text class="n" transform="matrix(0.8200 0.0007 -0.0007 1 407.45 492.56)" font-size="8.9" fill="#333" stroke="#333" stroke-width="0.05" text-anchor="end">38</text>
<text class="m" transform="matrix(0.9237 0.0007 -0.0007 1 463.32 491.21)" font-size="7.4" fill="#2c2c2c" stroke="#2c2c2c" stroke-width="0.06">case 6 :</text>
<rect x="471" y="425.66" width="0.8" height="9.5" fill="#000"/>
<rect x="722.1" y="154.6" width="11.7" height="340.3" fill="#f0f0f0"/>
<rect x="722.6" y="206.9" width="8.5" height="135.9" fill="#cdcdcd"/>
<path d="M724.55 161.25 L726.8 158.95 L729.05 161.25" stroke="#484848" stroke-width="1.2" fill="none"/>
<path d="M724.55 488.85 L726.8 491.15 L729.05 488.85" stroke="#484848" stroke-width="1.2" fill="none"/>
<rect x="393.6" y="494.9" width="340.2" height="1.5" fill="#f0f0f0"/>
<rect x="393.6" y="496.4" width="341.5" height="1.5" fill="#fff"/>
<rect x="0" y="497.9" width="740" height="5.1" fill="#eaeaea"/>
<rect x="735.3" y="12" width="4.7" height="491" fill="#eaeaea"/>
<rect x="0" y="0" width="0.8" height="503" fill="#d6d6d6"/>
<rect x="739.3" y="0" width="0.7" height="503" fill="#d6d6d6"/>
<rect x="0" y="502.3" width="740" height="0.7" fill="#d6d6d6"/>
<rect x="0" y="0" width="740" height="0.7" fill="#dedede"/>
<path d="M0 0 H2.2 Q0 0 0 2.2 Z M740 0 V2.2 Q740 0 737.8 0 Z M0 503 V500.8 Q0 503 2.2 503 Z M740 503 H737.8 Q740 503 740 500.8 Z" fill="#fff"/>
</g></svg></body></html>
